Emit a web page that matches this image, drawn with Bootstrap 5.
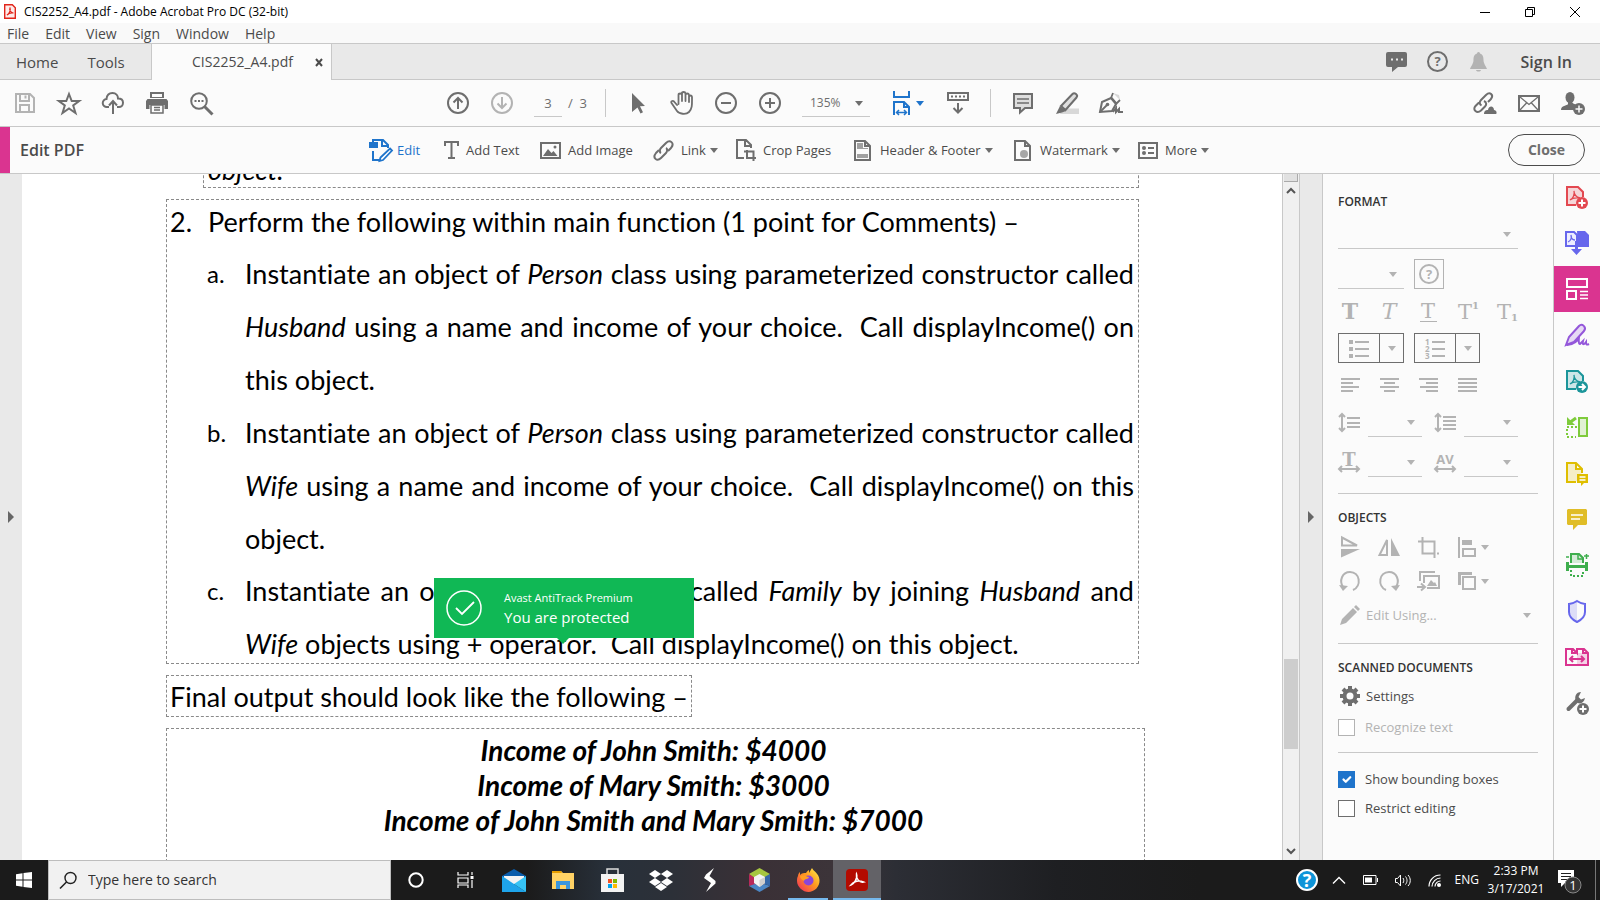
<!DOCTYPE html>
<html lang="en">
<head>
<meta charset="utf-8">
<meta name="viewport" content="width=device-width, initial-scale=1">
<title>CIS2252_A4.pdf - Adobe Acrobat Pro DC (32-bit)</title>
<link href="https://cdn.jsdelivr.net/npm/bootstrap@5.3.0/dist/css/bootstrap.min.css" rel="stylesheet">
<style>
:root{--ink:#4b4b4b;--icon:#6e6e6e;--off:#b3b3b3;--line:#c8c8c8;--bar:#fbfbfb;--blue:#1f74cb;--pink:#da3490}
body{font-family:"Open Sans","Noto Sans",sans-serif;font-size:14px;line-height:20px;color:var(--ink);background:#fff;height:100vh;overflow:hidden}
button,input,select{font:inherit;color:inherit}
button{background:none;border:0;padding:0}
svg{display:block;flex:none;fill:none;stroke:currentColor;stroke-width:2;overflow:visible}
svg .f{fill:currentColor;stroke:none}
svg .t{fill:currentColor;fill-opacity:.2}
svg text{fill:currentColor;stroke:none}
.caret{width:0;height:0;border:4px solid transparent;border-top:5px solid currentColor;border-bottom:0;flex:none}
.titlebar{height:23px;font-size:12px;color:#000}
.titlebar button{width:45px;height:23px;display:grid;place-items:center;color:#000}
.menubar{height:21px;background:#f9f9f9;border-bottom:1px solid var(--line);padding:1px 0 0 7px;gap:16px}
.menubar a,.tabs a{color:var(--ink);text-decoration:none}
.tabs{height:36px;background:#e9e9e9}
.tabs .idle{border-bottom:1px solid var(--line)}
.tabs .home{width:151px;padding-left:16px;gap:29px;font-size:15px}
.tabs .open{width:181px;background:var(--bar);border:1px solid var(--line);border-width:0 1px;padding:0 9px 0 40px}
.tools{height:47px;background:var(--bar);border-bottom:1px solid var(--line);color:var(--icon)}
.tb{width:44px;height:44px;display:grid;place-items:center;flex:none}
.off{color:var(--off)}
.sep{width:1px;height:28px;background:var(--line)}
.under{border:0;border-bottom:1px solid var(--line);background:transparent;border-radius:0;outline:0}
.pageno{width:28px;height:28px;font-size:13px;text-align:center;padding:0}
.zoomsel{width:68px;height:28px;font-size:12px;padding:0 8px;appearance:none}
.selwrap{position:relative}
.selwrap .caret{position:absolute;right:7px;top:50%;margin-top:-2px;pointer-events:none}
.editbar{display:grid;grid-template-columns:75px 96px 113px 83px 118px 160px 124px 71px}
.editbar button{display:flex;align-items:center;gap:7px;white-space:nowrap;color:var(--ink);font-size:13px}
.editbar svg{color:var(--icon)}
.editbar .caret{margin-left:-3px;color:var(--icon)}
.editbar .on,.editbar .on svg{color:var(--blue)}
.stripe{width:10px;background:var(--pink)}
.closebtn{width:77px;height:32px;border:1px solid var(--ink);border-radius:16px;font-weight:700}
.gutter{width:22px;background:#e9e9e9;color:#666}
.tri{width:0;height:0;border:6px solid transparent;border-left-color:#666;border-right:0}
.docpane{min-width:0;padding:0 137px 0 144px;background:#fff;overflow:hidden;color:#000;font-family:Lato,sans-serif;font-size:27px;font-variant-ligatures:none}
.bbox{border:1px dashed #8a8a8a;padding:0 4px}
.prev{margin:-23px 6px 0 37px;line-height:35px;flex:none}
.task{margin:11px 6px 0 0;padding-left:3px;flex:none}
.task h1{font-size:27px;line-height:44px;font-weight:400;margin:0;gap:16px}
.task ol{margin:3px 0 -7px 37px;line-height:53px}
.task li{display:flex}
.task li>span{width:38px;flex:none;font-size:24px}
.task li:last-child{margin-top:-1px}
.task p{flex:1;margin:0}
.just{display:block;text-align:justify;text-align-last:justify}
.final{margin-top:11px;padding:1px 3px 0;line-height:39px;align-self:flex-start;flex:none;letter-spacing:normal}
.result{margin-top:11px;padding-top:4px;padding-right:8px;font-size:28px;line-height:35px;text-align:center;font-weight:700;font-style:italic;height:240px;flex:none}
.scroll{width:18px;background:#f0f0f0;border:1px solid var(--line);border-width:0 1px;padding:0 1px;color:#555}
.thumb{height:90px;background:#cdcdcd}
.panel{width:232px;background:var(--bar);border:1px solid var(--line);border-width:0 1px;padding:18px 15px 0 15px;color:var(--ink);font-size:13px}
.panel h2{font-size:12px;font-weight:600;line-height:20px;margin:0;color:#333}
.panel hr{margin:0;border:0;border-top:1px solid var(--line);opacity:1}
.fontsel{width:180px;height:30px}
.sizesel{width:66px;height:30px}
.numsel{width:54px;height:30px}
.sq{width:30px;height:30px;border:1px solid var(--off);display:grid;place-items:center}
.grid5{display:grid;grid-template-columns:repeat(5,39px)}
.grid5>button{width:24px;height:26px;display:grid;place-items:center}
.grid5>.wide{width:44px;display:flex;align-items:center;gap:4px}
.ser text{font-family:"DejaVu Serif",serif}
.split{width:66px;height:30px;border:1px solid #6e6e6e}
.split button{display:grid;place-items:center}
.split button+button{border-left:1px solid #6e6e6e;width:24px}
.split button:first-child{flex:1}
.form-check{margin:0;padding:0;min-height:0;display:flex;align-items:center;gap:10px}
.form-check .form-check-input{margin:0;float:none;width:17px;height:17px;border-radius:0;border:1px solid #6e6e6e;background-color:#fff}
.form-check .form-check-input:checked{background-color:var(--blue);border-color:var(--blue)}
.form-check .form-check-input:disabled{border-color:var(--off);opacity:1}
.form-check .form-check-input:disabled~label{opacity:1}
.rail{width:46px;background:var(--bar)}
.rail button{height:46px;width:46px;display:grid;place-items:center}
.toast-av{position:absolute;left:434px;top:578px;width:260px;height:60px;background:#10b855;color:#fff;gap:22px;padding-left:12px}
.toast-av::after{content:"";position:absolute;left:123px;top:60px;border:6px solid transparent;border-top-color:#10b855;border-bottom:0}
.toast-av small{font-size:11px;line-height:18px;display:block}
.toast-av b{font-size:15px;line-height:20px;font-weight:400;display:block}
.taskbar{height:40px;color:#fff;background:linear-gradient(90deg,#1b1b1b 0,#1b1b1b 33%,#28303a 38%,#2c3038 42%,#3a3036 47%,#3c3439 52%,#2c2e35 56%,#1e1f22 66%,#1b1b1b 75%)}
.taskbar .app{width:48px;height:40px;margin-left:1px;display:grid;place-items:center;color:#fff}
.searchbox{width:343px;height:40px;background:#f1f1f1;border:1px solid #bdbdbd;color:#222}
.searchbox svg{margin:0 11px 0 11px}
.searchbox input{border:0;background:transparent;outline:0;font-size:14px}
.searchbox input::placeholder{color:#333;opacity:1}
.run{box-shadow:inset 0 -2px #76b9ed}
.ff{background:linear-gradient(#76b9ed,#76b9ed) center bottom/40px 2px no-repeat}
.clock{font-size:12px;line-height:18px;width:58px;margin-left:7px;text-align:center;white-space:nowrap}
.tray button{width:32px;height:40px;display:grid;place-items:center;color:#fff}
</style>
</head>
<body class="d-flex flex-column position-relative">
<header>
  <div class="titlebar d-flex align-items-center">
    <svg class="ms-1" width="12" height="15" viewBox="0 0 12 15" style="color:#e1251b"><path d="M.7.7h7.6l3 3v10.600H.7z" stroke-width="1.400" fill="#fdeceb"/><path d="M3 11c2-1 4-5 3-7-1 2 1 5 3.500 5C7 8.500 5 9 3 11z" stroke-width="1.200"/></svg>
    <span class="ms-2 flex-grow-1">CIS2252_A4.pdf - Adobe Acrobat Pro DC (32-bit)</span>
    <button aria-label="Minimize"><svg width="10" height="10"><path d="M0 5.500h10" stroke-width="1"/></svg></button>
    <button aria-label="Restore"><svg width="10" height="10"><path d="M.5 2.500h7v7h-7zM2.500 2.500v-2h7v7h-2" stroke-width="1"/></svg></button>
    <button style="margin-right:3px" aria-label="Close window"><svg width="10" height="10"><path d="M0 0l10 10M10 0L0 10" stroke-width="1"/></svg></button>
  </div>
  <nav class="menubar d-flex align-items-center" aria-label="Menu">
    <a href="#">File</a><a href="#">Edit</a><a href="#">View</a><a href="#">Sign</a><a href="#">Window</a><a href="#">Help</a>
  </nav>
  <div class="tabs d-flex">
    <div class="idle home d-flex align-items-center"><a href="#">Home</a><a href="#">Tools</a></div>
    <div class="open d-flex align-items-center justify-content-between"><span>CIS2252_A4.pdf</span><button aria-label="Close tab"><svg width="6" height="7"><path d="M0 0l6 7M6 0L0 7"/></svg></button></div>
    <div class="idle flex-grow-1 d-flex align-items-center justify-content-end" style="color:#6e6e6e">
      <button aria-label="Messages" style="margin-right:20px"><svg width="21" height="21" viewBox="0 0 21 21"><path class="f" d="M2 1h17a2 2 0 012 2v11a2 2 0 01-2 2h-7l-6 5v-5H2a2 2 0 01-2-2V3a2 2 0 012-2z"/><path d="M5 8.500h2m3 0h2m3 0h2" stroke="#e9e9e9"/></svg></button>
      <button aria-label="Help" style="margin-right:22px"><svg width="21" height="21" viewBox="0 0 21 21"><circle cx="10.500" cy="10.500" r="9.500"/><text x="10.500" y="15" text-anchor="middle" font-size="13" font-weight="700">?</text></svg></button>
      <button aria-label="Notifications" class="off" style="margin-right:34px"><svg width="17" height="20" viewBox="0 0 17 20"><path class="f" d="M8.500 0c1 0 1.500 1 1.500 1.500C13 2.500 13.500 5 13.500 8c0 4 3 7 3.500 9H0c.5-2 3.500-5 3.500-9C3.500 5 4 2.500 7 1.500 7 1 7.500 0 8.500 0zM6 18h5c-.5 2-4.500 2-5 0z"/></svg></button>
      <a href="#" style="font-size:16px;font-weight:600;margin-right:28px">Sign In</a>
    </div>
  </div>
  <div class="tools d-flex align-items-center">
    <div class="d-flex" style="flex:1 1 0;padding-left:3px">
      <button class="tb off" aria-label="Save"><svg width="20" height="20" viewBox="0 0 20 20"><path d="M1 1h14l4 4v14H1zM5 1v7h9V1M5 19v-7h9v7M10.500 2.500v3"/></svg></button>
      <button class="tb" aria-label="Star"><svg width="24" height="23" viewBox="0 0 24 23"><path d="M12 2l2.700 7h7.500l-6 4.500 2.300 7.500L12 16.500 5.500 21l2.300-7.500-6-4.500h7.500z"/></svg></button>
      <button class="tb" aria-label="Upload"><svg width="22" height="22" viewBox="0 0 22 22"><path d="M7 15H5a4 4 0 01-.5-8C5 2 8 1 10.500 1c3.500 0 5.500 2.500 5.500 5.500 3 0 5 1.500 5 4.300 0 2.700-2 4.200-4 4.200h-2M11 22V10M7 13.500L11 9l4 4.500"/></svg></button>
      <button class="tb" aria-label="Print"><svg width="22" height="22" viewBox="0 0 22 22"><path class="f" d="M4 6h14V0H4zM1.500 7h19L22 9v8h-3.500v-4h-15v4H0V9z"/><path d="M6 5V2h10v3z" fill="#fbfbfb" stroke="none"/><path d="M5 13h12v8H5zM8 15.500h6M8 18h6" stroke-width="1.500"/></svg></button>
      <button class="tb" aria-label="Find"><svg width="23" height="23" viewBox="0 0 23 23"><circle cx="9" cy="9" r="7.800"/><path d="M14.500 14.500l8 8" stroke-width="3"/><path d="M4.500 9h2m1.500 0h2m1.500 0h2"/></svg></button>
    </div>
    <div class="d-flex align-items-center" style="margin-right:29px">
      <button class="tb" aria-label="Previous page"><svg width="22" height="22" viewBox="0 0 22 22"><circle cx="11" cy="11" r="10"/><path d="M11 17V6M6.500 10.500L11 6l4.500 4.500"/></svg></button>
      <button class="tb off" aria-label="Next page"><svg width="22" height="22" viewBox="0 0 22 22"><circle cx="11" cy="11" r="10"/><path d="M11 5v11M6.500 11.500L11 16l4.500-4.500"/></svg></button>
      <input class="under pageno" style="margin-left:10px" aria-label="Page number" value="3"><span style="width:43px;padding-left:6px;font-size:13px;white-space:pre">/  3</span>
      <span class="sep" style="margin-right:10px"></span>
      <button class="tb" aria-label="Select"><svg width="14" height="21" viewBox="0 0 14 21"><path class="f" d="M1 0l13 13-5 .3 3 6-2.500 1.300-3-6L1 19z"/></svg></button>
      <button class="tb" aria-label="Pan"><svg width="24" height="24" viewBox="0 0 24 24" stroke-linecap="round" stroke-linejoin="round"><path d="M7 14L4 10.500c-1.500-1.500-3.500 0-2.500 1.500L7 20c2 3 9 4 12 1 3.500-3.500 3-8 3-15-.3-2-3-2-3 0v5V4c-.3-2-3.500-2-3.500 0v6V2.500c-.3-2-3.500-2-3.500 0V10 4c-.3-2-3.500-2-3.500 0v9" stroke-width="1.800"/></svg></button>
      <button class="tb" aria-label="Zoom out"><svg width="22" height="22" viewBox="0 0 22 22"><circle cx="11" cy="11" r="10"/><path d="M6 11h10"/></svg></button>
      <button class="tb" aria-label="Zoom in"><svg width="22" height="22" viewBox="0 0 22 22"><circle cx="11" cy="11" r="10"/><path d="M6 11h10M11 6v10"/></svg></button>
      <span class="selwrap" style="margin:0 16px 0 10px"><select class="under zoomsel" aria-label="Zoom"><option>135%</option></select><span class="caret"></span></span>
      <button class="d-flex align-items-center" style="color:var(--blue);gap:6px;margin:0 12px 0 7px" aria-label="Fit width"><svg width="17" height="24" viewBox="0 0 17 24"><path d="M1 0v6h15V0M1 24V11h10l5 5v8M11 11v5h5"/><path d="M4 21.500h9M6 19l-2.500 2.500L6 24M11 19l2.500 2.500L11 24" stroke-width="1.500"/></svg><span class="caret"></span></button>
      <button class="tb" aria-label="Hide toolbar"><svg width="22" height="22" viewBox="0 0 22 22"><path d="M1 1h20v7H1zM11 11v9M6.500 16l4.500 4.500 4.500-4.500"/><path d="M4 4.500h14" stroke-dasharray="2 2"/></svg></button>
      <span class="sep" style="margin:0 10px"></span>
      <button class="tb" aria-label="Comment"><svg width="20" height="21" viewBox="0 0 20 21"><path class="t" d="M1 1h18v14h-7l-5 4.500V15H1z"/><path d="M4 6h12M4 10h12" stroke-width="1.500"/></svg></button>
      <button class="tb" aria-label="Highlight"><svg width="23" height="22" viewBox="0 0 23 22"><path class="f" d="M6 16.500h17V22H4z" opacity=".25"/><path class="t" d="M5 14L16.500 2c2-2 6 1 4 3.500L9.500 18z"/><path class="f" d="M4 14l6 5-4 1.500L0 22z"/></svg></button>
      <button class="tb" aria-label="Sign"><svg width="24" height="23" viewBox="0 0 24 23"><path class="f" d="M14 1l7 7-1-5z" opacity=".25"/><path d="M1 20L3 10l9-4 5 6-4 7z"/><path d="M12 6l2-5M17 12l4-4M12 5l6 7M1 20l7-7" stroke-width="1.800"/><circle class="f" cx="8.500" cy="12.500" r="1.800"/><path d="M14 20l3-4v4l3-3v3h4"/></svg></button>
    </div>
    <div class="d-flex justify-content-end" style="flex:1 1 0;padding-right:5px">
      <button class="tb" aria-label="Share link"><svg width="24" height="22" viewBox="0 0 24 22"><path d="M8.500 13.500C6 12 6.500 9.500 8 8l5-5c4-4 8 0 5 4l-3 3M11 9c3 1.500 2.500 4 1 5.500l-4 4C4 22-1 18 2.500 14L6 10.500"/><path class="f" d="M11 22c0-4 3-4 4-4 1-5 6-4 6 0 3 0 3 4 2 4z"/></svg></button>
      <button class="tb" aria-label="Email"><svg width="22" height="17" viewBox="0 0 22 17"><path d="M1 1h20v15H1z"/><path d="M2 2l9 7.500L20 2M2 15l6.500-7M20 15l-6.500-7" stroke-width="1.300"/></svg></button>
      <button class="tb" aria-label="Add people"><svg width="24" height="23" viewBox="0 0 24 23"><ellipse class="f" cx="9" cy="5.500" rx="4.500" ry="5.500"/><path class="f" d="M7 9h4c0 3 3 3 5 4l-3 5H0c0-5 6-4 7-6z"/><circle class="f" cx="18" cy="17" r="6"/><path d="M14.500 17h7M18 13.500v7" stroke="#fbfbfb" stroke-width="1.500"/></svg></button>
    </div>
  </div>
  <div class="tools d-flex align-items-stretch">
    <div class="d-flex" style="flex:1 1 0"><span class="stripe"></span><span class="align-self-center" style="padding-left:10px;font-size:16px;font-weight:600;color:#4b4b4b">Edit PDF</span></div>
    <div class="editbar" style="margin-right:22px">
      <button class="on"><svg width="23" height="23" viewBox="0 0 23 23"><path class="f" d="M0 3h9v6H0z"/><path d="M4 3V1h10l5 5v3M4 12v9h7M13 1v6h6"/><path d="M21 9.500l2 2L14 21l-3.500 1 1-3.500z" fill="#fff" stroke-width="1.800"/></svg><span style="margin-left:-2px">Edit</span></button>
      <button><svg width="15" height="18" viewBox="0 0 15 18"><path d="M1 5V1h13v4M7.500 1v16M4 17h7"/></svg>Add Text</button>
      <button><svg width="21" height="17" viewBox="0 0 21 17"><path d="M1 1h19v15H1z"/><path class="f" d="M3 14l5-7 3.500 4 2-2 4 5z"/><circle class="f" cx="15" cy="5" r="1.500"/></svg>Add Image</button>
      <button><svg width="21" height="21" viewBox="0 0 21 21"><path d="M8 13c-2-1-1-4 0-5l5-5c4-4 9 0 5 5l-3 3M13 8c2 1 1 4 0 5l-5 5c-4 4-9 0-5-5l3-3"/></svg>Link<span class="caret"></span></button>
      <button><svg width="20" height="22" viewBox="0 0 20 22"><path d="M8 19H1V1h9l5 5v3M9 1v6h6M11 11v8h9M8 12.500h9.500V22"/></svg>Crop Pages</button>
      <button><svg width="17" height="21" viewBox="0 0 17 21"><path d="M1 1h10l5 5v14H1zM11 1v5h5"/><path class="f" opacity=".65" d="M3 3h6v5h5v1H3zM3 14h11v4H3z"/></svg><span style="margin-left:2px">Header &amp; Footer</span><span class="caret"></span></button>
      <button><svg width="17" height="21" viewBox="0 0 17 21"><path d="M1 1h10l5 5v14H1zM11 1v5h5"/><circle class="f" opacity=".6" cx="10" cy="14" r="4"/></svg><span style="margin-left:2px">Watermark</span><span class="caret"></span></button>
      <button><svg width="20" height="17" viewBox="0 0 20 17"><path d="M1 1h18v15H1zM10 6h6M10 11h6"/><circle class="f" cx="6" cy="6" r="2"/><circle class="f" cx="6" cy="11" r="2"/></svg>More<span class="caret"></span></button>
    </div>
    <div class="d-flex justify-content-end align-items-center" style="flex:1 1 0"><button class="closebtn" style="margin-right:15px">Close</button></div>
  </div>
</header>

<main class="d-flex flex-grow-1 overflow-hidden" style="min-height:0">
  <div class="gutter d-flex align-items-center justify-content-center"><span class="tri"></span></div>
  <article class="docpane d-flex flex-column flex-grow-1">
    <div class="bbox prev"><i>object.</i></div>
    <section class="bbox task">
      <h1 class="d-flex"><span>2.</span><span>Perform the following within main function (1 point for Comments) –</span></h1>
      <ol class="list-unstyled">
        <li><span>a.</span><p><span class="just">Instantiate an object of <i>Person</i> class using parameterized constructor called</span><span class="just"><i>Husband</i> using a name and income of your choice.&nbsp; Call displayIncome() on</span>this object.</p></li>
        <li><span>b.</span><p><span class="just">Instantiate an object of <i>Person</i> class using parameterized constructor called</span><span class="just"><i>Wife</i> using a name and income of your choice.&nbsp; Call displayIncome() on this</span>object.</p></li>
        <li><span>c.</span><p><span class="just">Instantiate an object of <i>Person</i> class called <i>Family</i> by joining <i>Husband</i> and</span><i>Wife</i> objects using + operator.&nbsp; Call displayIncome() on this object.</p></li>
      </ol>
    </section>
    <div class="bbox final">Final output should look like the following –</div>
    <div class="bbox result">Income of John Smith: $4000<br>Income of Mary Smith: $3000<br>Income of John Smith and Mary Smith: $7000</div>
  </article>
  <div class="scroll d-flex flex-column">
    <div style="height:8px;background:#e1e1e1;border:1px solid #aaa;border-width:0 1px 1px 0"></div>
    <svg class="mx-auto" style="margin-top:6px" width="8" height="6"><path d="M0 5l4-4 4 4"/></svg>
    <div class="flex-grow-1"></div>
    <div class="thumb"></div>
    <div style="height:99px"></div>
    <svg class="mx-auto" style="margin-bottom:5px" width="8" height="7"><path d="M0 1l4 4 4-4"/></svg>
  </div>
  <div class="gutter d-flex align-items-center justify-content-center"><span class="tri"></span></div>
  <aside class="panel flex-shrink-0">
    <h2>FORMAT</h2>
    <div class="off">
      <div class="selwrap fontsel" style="margin-top:7px"><select class="under fontsel" style="appearance:none" aria-label="Font" disabled></select><span class="caret"></span></div>
      <div class="d-flex" style="margin-top:10px;gap:10px"><div class="selwrap"><select class="under sizesel" style="appearance:none" aria-label="Font size" disabled></select><span class="caret"></span></div>
        <button class="sq off" aria-label="Color"><svg width="20" height="20" viewBox="0 0 20 20"><circle cx="10" cy="10" r="9"/><text x="10" y="14.500" text-anchor="middle" font-size="13" font-weight="700">?</text></svg></button></div>
      <div class="grid5 off ser" style="margin-top:9px">
        <button class="off" aria-label="Bold"><svg width="18" height="18"><text x="9" y="17" text-anchor="middle" font-size="22" font-weight="700">T</text></svg></button>
        <button class="off" aria-label="Italic"><svg width="18" height="18"><text x="9" y="17" text-anchor="middle" font-size="22" font-style="italic">T</text></svg></button>
        <button class="off" aria-label="Underline"><svg width="18" height="18"><text x="9" y="16" text-anchor="middle" font-size="21">T</text><path d="M1 19.500h17" stroke-width="1"/></svg></button>
        <button class="off" aria-label="Superscript"><svg width="18" height="18"><text x="7" y="17" text-anchor="middle" font-size="21">T</text><text x="14" y="7" font-size="10" font-weight="700">1</text></svg></button>
        <button class="off" aria-label="Subscript"><svg width="18" height="18"><text x="7" y="17" text-anchor="middle" font-size="21">T</text><text x="14" y="19" font-size="10" font-weight="700">1</text></svg></button>
      </div>
      <div class="d-flex" style="margin-top:9px;gap:10px">
        <div class="split d-flex"><button class="off" aria-label="Bulleted list"><svg width="20" height="19"><path d="M6 3h14M6 10h14M6 17h14"/><path d="M0 3h4M0 10h4M0 17h4" stroke-width="4"/></svg></button><button class="off" aria-label="Bullet styles"><span class="caret"></span></button></div>
        <div class="split d-flex"><button class="off" aria-label="Numbered list"><svg width="20" height="19"><path d="M7 3h13M7 10h13M7 17h13"/><text font-size="8" font-weight="700"><tspan x="0" y="6">1</tspan><tspan x="0" y="13">2</tspan><tspan x="0" y="20">3</tspan></text></svg></button><button class="off" aria-label="Number styles"><span class="caret"></span></button></div>
      </div>
      <div class="grid5" style="margin-top:9px">
        <button class="off" aria-label="Align left"><svg width="19" height="14"><path d="M0 1h19M0 5h12M0 9h18M0 13h12"/></svg></button>
        <button class="off" aria-label="Align center"><svg width="19" height="14"><path d="M0 1h19M4 5h11M0 9h19M4 13h11"/></svg></button>
        <button class="off" aria-label="Align right"><svg width="19" height="14"><path d="M0 1h19M7 5h12M1 9h18M7 13h12"/></svg></button>
        <button class="off" aria-label="Justify"><svg width="19" height="14"><path d="M0 1h19M0 5h19M0 9h19M0 13h19"/></svg></button>
      </div>
      <div class="d-flex align-items-center" style="margin-top:9px;gap:8px"><svg width="22" height="19"><path d="M4 1v17M1 4l3-3 3 3M1 15l3 3 3-3M9 5h13M9 10h13M9 14h13"/></svg><span class="selwrap"><select class="under numsel" style="appearance:none" aria-label="Line spacing" disabled></select><span class="caret"></span></span>
        <svg width="22" height="19" class="ms-1"><path d="M4 1v17M1 4l3-3 3 3M1 15l3 3 3-3M9 4h13M9 8h13M9 12h13M9 16h13"/></svg><span class="selwrap"><select class="under numsel" style="appearance:none" aria-label="Paragraph spacing" disabled></select><span class="caret"></span></span></div>
      <div class="d-flex align-items-center" style="margin-top:10px;gap:8px"><svg class="ser" width="22" height="20"><text x="11" y="14" text-anchor="middle" font-size="18" font-weight="700">T</text><path d="M1 17h20M4 14l-3 3 3 3M18 14l3 3-3 3"/></svg><span class="selwrap"><select class="under numsel" style="appearance:none" aria-label="Horizontal scaling" disabled></select><span class="caret"></span></span>
        <svg width="22" height="20" class="ms-1"><text x="11" y="12" text-anchor="middle" font-size="13" font-weight="700">AV</text><path d="M1 17h20M4 14l-3 3 3 3M18 14l3 3-3 3"/></svg><span class="selwrap"><select class="under numsel" style="appearance:none" aria-label="Character spacing" disabled></select><span class="caret"></span></span></div>
    </div>
    <hr style="margin-top:16px">
    <h2 style="margin-top:14px">OBJECTS</h2>
    <div class="grid5" style="margin-top:6px;row-gap:8px">
      <button class="off" aria-label="Flip vertical"><svg width="19" height="22"><path d="M1 1.500v8h15z"/><path class="f" d="M0 21.500V13h19z"/></svg></button>
      <button class="off" aria-label="Flip horizontal"><svg width="22" height="18"><path d="M9 2v15H1.500z"/><path class="f" d="M13 0v18h9z"/></svg></button>
      <button class="off" aria-label="Crop"><svg width="21" height="21"><path d="M4.500 0v16.500H17M0 4.500h16.500V21M19 16.500h2"/></svg></button>
      <button class="off wide" aria-label="Align objects"><svg width="19" height="21" style="margin-left:3px"><path d="M1 0v21M5 12h12v7H5z"/><path class="f" d="M4 3h10v5H4z"/></svg><span class="caret"></span></button><span></span>
      <button class="off" aria-label="Rotate counterclockwise"><svg width="22" height="20"><path d="M14 19c9-4 7-18-3-18C3 1 0 10 4 16"/><path class="f" d="M0 14l9 1-5 5z"/></svg></button>
      <button class="off" aria-label="Rotate clockwise"><svg width="22" height="20"><path d="M8 19C-1 15 1 1 11 1c8 0 11 9 7 15"/><path class="f" d="M22 14l-9 1 5 5z"/></svg></button>
      <button class="off" aria-label="Replace image"><svg width="23" height="20"><path d="M3 10V1h15M7 12V5h15v12H10M0 16h7M4 12.500L8 16l-4 3.500"/><path class="f" d="M10 15l4-6 3 3 1-1 2 4z"/></svg></button>
      <button class="off wide" aria-label="Arrange"><svg width="19" height="19" style="margin-left:3px"><path d="M5 5h12v12H5z"/><path d="M1.500 13V1.500H14" stroke-width="3"/></svg><span class="caret"></span></button>
    </div>
    <button class="off d-flex align-items-center w-100" style="margin-top:11px;padding:0 7px 0 2px;gap:6px"><svg width="20" height="20" viewBox="0 0 20 20"><path class="f" d="M0 20l2-6L13 3l4 4L6 18zM14 2l2-2 4 4-2 2z"/></svg><span class="flex-grow-1 text-start">Edit Using...</span><span class="caret"></span></button>
    <hr style="margin-top:18px">
    <h2 style="margin-top:14px">SCANNED DOCUMENTS</h2>
    <button class="d-flex align-items-center" style="margin-top:8px;padding-left:2px;gap:6px"><svg width="20" height="20" viewBox="-10 -10 20 20" style="color:#6e6e6e"><circle r="5.500" stroke-width="4"/><path d="M0-10v4M0 10V6M-10 0h4M10 0H6M-7-7l3 3M7 7L4 4M-7 7l3-3M7-7L4-4" stroke-width="4"/></svg>Settings</button>
    <div class="form-check off" style="margin-top:11px"><input class="form-check-input" type="checkbox" id="rec" disabled><label for="rec">Recognize text</label></div>
    <hr style="margin-top:15px">
    <div class="form-check" style="margin-top:16px"><input class="form-check-input" type="checkbox" id="bb" checked><label for="bb">Show bounding boxes</label></div>
    <div class="form-check" style="margin-top:9px"><input class="form-check-input" type="checkbox" id="re"><label for="re">Restrict editing</label></div>
  </aside>
  <nav class="rail flex-shrink-0" aria-label="Tools">
    <button aria-label="Create PDF" style="color:#e34850"><svg width="22" height="23" viewBox="0 0 22 23"><path class="t" d="M10 19H1V1h11l5 5v5"/><path d="M4 14c3-1 5-6 4-9 0 4 2 6 6 7-4-.5-8 0-10 2" stroke-width="1.300"/><circle class="f" cx="16" cy="17" r="6"/><path d="M12.500 17h7M16 13.500v7" stroke="#fff"/></svg></button>
    <button aria-label="Combine files" style="color:#6767ec"><svg width="24" height="24" viewBox="0 0 24 24"><path class="f" d="M12 0h8l4 4v12H13z"/><path d="M1 1h8l3 3v11H1z" fill="#eef"/><path d="M3 11c3-1 4-5 3-7 0 3 1 5 4 5" stroke-width="1.300"/><path class="f" d="M10 10h3v8h4l-5.500 6L6 18h4z"/></svg></button>
    <button aria-label="Edit PDF" style="background:var(--pink);color:#fff"><svg width="22" height="22"><path d="M1 1h20v8H1zM1 13h9v8H1z"/><path d="M14 13.500h8M14 17h8M14 20.500h8" stroke-width="1.300"/></svg></button>
    <button aria-label="Sign" style="color:#9457da"><svg width="24" height="22" viewBox="0 0 24 22"><path class="t" d="M1 21L4 13 14 2c3-3 8 1 5 5L9 18z"/><path d="M2 21c6 0 12-5 12-8 0 0-1 7 1 7l3-3c-1 4 1 4 3 1 0 3 1 3 3 2"/></svg></button>
    <button aria-label="Export PDF" style="color:#1b959a"><svg width="22" height="23" viewBox="0 0 22 23"><path class="t" d="M10 19H1V1h11l5 5v5"/><path d="M4 14c3-1 5-6 4-9 0 4 2 6 6 7-4-.5-8 0-10 2" stroke-width="1.300"/><circle class="f" cx="16" cy="17" r="6"/><path d="M12.500 17h6M16 14l3 3-3 3" stroke="#fff"/></svg></button>
    <button aria-label="Organize pages" style="color:#7ecb3b"><svg width="22" height="21" viewBox="0 0 22 21"><path class="t" d="M13 1h8v18h-8z"/><path d="M11 10H1v10h9" stroke-dasharray="2 2"/><path d="M10 1L3 6" stroke-width="3"/><path class="f" d="M1 0v8h8z"/></svg></button>
    <button aria-label="Send for review" style="color:#dfbe00"><svg width="22" height="23" viewBox="0 0 22 23"><path class="t" d="M10 20H1V1h9l6 6v4M10 1v6h6"/><path class="f" d="M11 12h11v9h-4l-3 3v-3h-4z"/><path d="M13.500 15h6M13.500 18h6" stroke="#fff" stroke-width="1.300"/></svg></button>
    <button aria-label="Comment" style="color:#e0bd27"><svg width="20" height="21" viewBox="0 0 20 21"><path class="f" d="M1 0h18l1 1v14l-1 1h-8l-5 5v-5H1l-1-1V1z"/><path d="M4 6h12M4 10h9" stroke="#fff" stroke-width="1.500"/></svg></button>
    <button aria-label="Scan and OCR" style="color:#3eae4d"><svg width="23" height="24" viewBox="0 0 23 24"><path class="t" d="M5 10V1h8l4 4v5"/><path d="M12 1v5h5" stroke-width="1.500"/><path class="f" d="M0 9h3v3h16V9h3v9h-3v-3H3v3H0z"/><path d="M5 17v6h12v-6" stroke-dasharray="2 2"/><path d="M0 4h3M18 3h5M20.500 1v5" stroke-width="1.500"/></svg></button>
    <button aria-label="Protect" style="color:#6767ec"><svg width="18" height="23" viewBox="0 0 18 23"><path d="M9 1c3 2 5 3 8 3v8c0 5-4 8-8 10-4-2-8-5-8-10V4c3 0 5-1 8-3z"/><path class="f" opacity=".2" d="M9 1v21c-4-2-8-5-8-10V4c3 0 5-1 8-3z"/></svg></button>
    <button aria-label="Compare files" style="color:#da3490"><svg width="24" height="18" viewBox="0 0 24 18"><path d="M1 1h7l4 4V1h7l4 4v12H1zM7 1v4h4M18 1v4h5"/><path class="t" d="M12 5h10v11H12z" stroke="none"/><path d="M5 11h14M8 8l-3 3 3 3M16 8l3 3-3 3"/></svg></button>
    <button aria-label="More tools" style="color:#6e6e6e"><svg width="23" height="23" viewBox="0 0 23 23"><path d="M2.500 17L11 8.500" stroke-width="4" stroke-linecap="round"/><path class="f" d="M15 0c-5 0-7 5-5 9s8 3 9-3l-4 1.500L12.500 5z"/><circle class="f" cx="17" cy="17" r="6"/><path d="M13.500 17h7M17 13.500v7" stroke="#fff"/></svg></button>
  </nav>
</main>

<footer class="taskbar d-flex align-items-center">
  <button class="app m-0" aria-label="Start"><svg width="16" height="16"><path class="f" d="M0 2.200L6.500 1.200v6.300H0zM7.500 1L16 0v7.500H7.500zM0 8.500h6.500v6.300L0 13.800zM7.500 8.500H16V16l-8.500-1z"/></svg></button>
  <div class="searchbox d-flex align-items-center"><svg width="17" height="17"><circle cx="10.500" cy="6" r="5.500" stroke-width="1.400"/><path d="M6.500 10L0 16.500" stroke-width="1.600"/></svg><input class="flex-grow-1 p-0" type="text" aria-label="Search" placeholder="Type here to search"></div>
  <button class="app" aria-label="Cortana"><svg width="16" height="16"><circle cx="8" cy="8" r="6.700"/></svg></button>
  <button class="app" aria-label="Task view"><svg width="17" height="16"><path d="M1 0v3h10V0M1 6h10v5H1zM1 16v-3h10v3M15 0v3M15 8v8" stroke-width="1.200"/><path class="f" d="M13.500 4h3v3h-3z"/></svg></button>
  <button class="app" aria-label="Mail"><svg width="24" height="23" viewBox="0 0 24 23"><path d="M0 7l12-7 12 7v4H0z" fill="#0a5cab" stroke="none"/><path d="M2 7h20v8H2z" fill="#f3f3f3" stroke="none"/><path d="M0 7l24 16H0z" fill="#1ea4ea" stroke="none"/><path d="M24 7v16L12 15z" fill="#36c3f5" stroke="none"/></svg></button>
  <button class="app" aria-label="File Explorer"><svg width="22" height="18"><path d="M0 0h9l2 2h11v16H0z" fill="#ffd265" stroke="none"/><path d="M0 0h9l1 2H0z" fill="#e59d00" stroke="none"/><path d="M4 18v-8h14v8h-4v-4H8v4z" fill="#3a96dd" stroke="none"/></svg></button>
  <button class="app" aria-label="Microsoft Store"><svg width="23" height="24"><path d="M6 7V1h11v6" stroke="#ddd" stroke-width="1.500"/><path d="M0 6h23v18H0z" fill="#f3f3f3" stroke="none"/><path d="M7 11h4v4H7z" fill="#f25022" stroke="none"/><path d="M12 11h4v4h-4z" fill="#7fba00" stroke="none"/><path d="M7 16h4v4H7z" fill="#00a4ef" stroke="none"/><path d="M12 16h4v4h-4z" fill="#ffb900" stroke="none"/></svg></button>
  <button class="app" aria-label="Dropbox"><svg width="24" height="21"><path class="f" d="M6 0l6 4-6 4-6-4zM18 0l6 4-6 4-6-4zM6 8l6 4-6 4-6-4zM18 8l6 4-6 4-6-4zM12 13l6 4-6 4-6-4z"/></svg></button>
  <button class="app" aria-label="Notes"><svg width="12" height="24"><path class="f" d="M10 0L2 6.500 0 10l7 5-5 9 9.500-8.500V13L5.500 8z"/></svg></button>
  <button class="app" aria-label="NetBeans"><svg width="21" height="24" viewBox="0 0 21 24"><path d="M10.500 0L21 6l-5 4H5L0 6z" fill="#a6c640" stroke="none"/><path d="M0 6l6 4v7l-6 1z" fill="#b7295a" stroke="none"/><path d="M0 18l6-2 4.500 2 5-2 5.500 2-10.500 6z" fill="#4b86c5" stroke="none"/><path d="M21 6v12l-5.500-2V9z" fill="#3567a8" stroke="none"/><path d="M10.500 6L16 9v6l-5.500 4L5 15V9z" fill="#f3f3f3" stroke="none"/><path d="M10.500 12L16 9v6l-5.500 4z" fill="#cfcfcf" stroke="none"/></svg></button>
  <button class="app ff" aria-label="Firefox"><svg width="23" height="24" viewBox="0 0 23 24"><defs><linearGradient id="fx" x1="1" y1="0" x2="0" y2="1"><stop offset="0" stop-color="#fff44f"/><stop offset=".45" stop-color="#ff9a1f"/><stop offset="1" stop-color="#f0235f"/></linearGradient></defs><path d="M1 8c0-2 1-3 2-4v3c2-2 4-2 6-2 1-2 3-3 3-3v3l3-5c1 3 7 5 7.500 12C23 19 17 24 11.500 24S0 19 0 13c0-2 0-3 1-5z" fill="url(#fx)" stroke="none"/><circle cx="11.500" cy="12.500" r="5" fill="#8b45d8" stroke="none"/><path d="M3 8c4-2 6 1 9 1-1 3-4 1-5 4-2-1-4-3-4-5z" fill="#ff9f22" stroke="none"/></svg></button>
  <button class="app run" style="background-color:#636267" aria-label="Acrobat"><svg width="22" height="22" viewBox="0 0 22 22"><rect width="22" height="22" rx="4" fill="#b30b00" stroke="none"/><path d="M5 16c3-1 7-7 5.500-11-1 4 3 9 7 8-4-1.500-9-1-12.500 3z" stroke-width="1.500"/></svg></button>
  <div class="tray d-flex align-items-center ms-auto">
    <button aria-label="Get help"><svg width="22" height="22"><circle cx="11" cy="11" r="10" fill="#0e94d8" stroke="#fff"/><text x="11" y="17.500" text-anchor="middle" font-size="18" font-weight="700">?</text></svg></button>
    <button aria-label="Show hidden icons"><svg width="12" height="7"><path d="M0 6.500l6-6 6 6" stroke-width="1.400"/></svg></button>
    <button aria-label="Battery"><svg width="15" height="10"><path d="M.5.500h12.500v9H.5zM14.500 3v4" stroke-width="1"/><path class="f" d="M2 2.500h7v5H2z"/></svg></button>
    <button aria-label="Volume"><svg width="16" height="13"><path d="M.5 4.500h2l3-3.500v11l-3-3.500h-2zM8 4c1 1.500 1 3.500 0 5M10.500 2.500c2 2.500 2 5.500 0 8M13 1c3 3 3 8 0 11" stroke-width="1"/></svg></button>
    <button aria-label="Network"><svg width="13" height="13"><path d="M1 12.500C1 6 6 1 12.500 1M4 12.500C4 8 8 4 12.500 4M7 12.500C7 9.500 9.500 7 12.500 7" stroke-width="1.200"/><circle class="f" cx="11" cy="11" r="2"/></svg></button>
    <span class="ms-1" style="font-size:12px">ENG</span>
    <span class="clock ms-2">2:33 PM<br>3/17/2021</span>
    <button style="width:36px;margin:0 8px 0 6px" aria-label="Notifications"><svg width="25" height="25"><path class="f" d="M1 2h16v13h-9l-4 4v-4H1z"/><path d="M4 5.500h10M4 8.500h10M4 11.500h6" stroke="#222" stroke-width="1"/><circle cx="16" cy="17" r="8" fill="#333" stroke="#888" stroke-width="1"/><text x="16" y="22" text-anchor="middle" font-size="13">1</text></svg></button>
    <span style="width:5px;height:40px;border-left:1px solid #777"></span>
  </div>
</footer>

<div class="toast-av d-flex align-items-center" role="status">
  <svg width="36" height="36"><circle cx="18" cy="18" r="17" stroke-width="1.500"/><path d="M10 18l6 6 12-12" stroke-width="1.800"/></svg>
  <div><small>Avast AntiTrack Premium</small><b>You are protected</b></div>
</div>
<script src="https://cdn.jsdelivr.net/npm/bootstrap@5.3.0/dist/js/bootstrap.bundle.min.js"></script>
</body>
</html>
